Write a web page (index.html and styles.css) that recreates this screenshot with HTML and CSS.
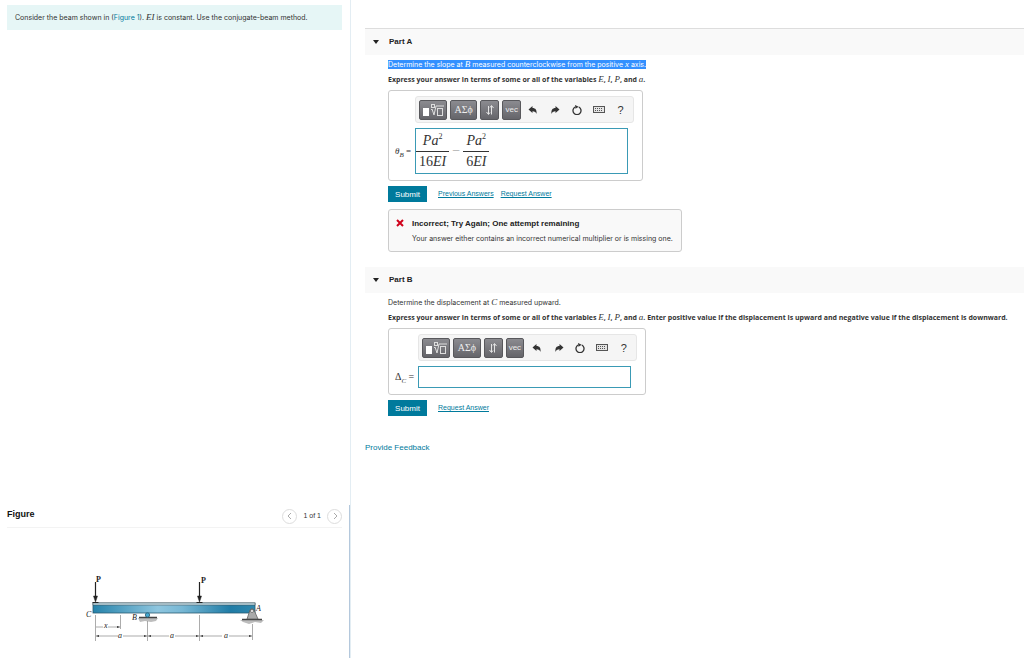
FILE: index.html
```html
<!DOCTYPE html>
<html lang="en">
<head>
    <meta charset="UTF-8">
    <meta name="viewport" content="width=device-width, initial-scale=1.0">
    <title>Conjugate-Beam Method</title>
    <link rel="stylesheet" href="styles.css">
</head>
<body>

    <!-- Shared icons -->
    <svg class="sprite" aria-hidden="true">
        <symbol id="icon-template" viewBox="0 0 22 14">
            <rect x="1" y="5" width="6" height="8" fill="#fff"/>
            <rect x="9.500" y="1.500" width="3" height="3" fill="none" stroke="#ddd"/>
            <path d="M9 7l1-1 2 6 2-9h8" fill="none" stroke="#ddd"/>
            <rect x="15.500" y="5.500" width="5" height="7" fill="none" stroke="#ddd"/>
        </symbol>
        <symbol id="icon-arrows" viewBox="0 0 10 12">
            <path d="M3.500 2v8M1.500 8l2 2.500L5 8.500M6.500 10.500V2M5 3.500l1.500-2 2 2.500" fill="none" stroke="#e4e4e4"/>
        </symbol>
        <symbol id="icon-undo" viewBox="0 0 10 10">
            <path d="M0.500 4.500L4.500 1v2c3 0 4.500 2 4 6-.6-1.800-1.800-2.800-4-2.800V8z" fill="#333"/>
        </symbol>
        <symbol id="icon-redo" viewBox="0 0 10 10">
            <path d="M9.500 4.500L5.500 1v2c-3 0-4.500 2-4 6 .6-1.800 1.800-2.800 4-2.800V8z" fill="#333"/>
        </symbol>
        <symbol id="icon-reset" viewBox="0 0 10 10">
            <path d="M3.200 2A4 4 0 1 0 6.800 2" fill="none" stroke="#333" stroke-width="1.300"/>
            <path d="M3 0l3.700 1.800-3.200 2z" fill="#333"/>
        </symbol>
        <symbol id="icon-keyboard" viewBox="0 0 12 8">
            <rect x="0.500" y="0.500" width="11" height="6" fill="#e4e4e4" stroke="#555"/>
            <path d="M2 2.500h8M2 4.500h8" fill="none" stroke="#555" stroke-dasharray="1 1"/>
        </symbol>
    </svg>

    <div class="page">

        <aside class="sidebar">
            <div class="prompt">
                Consider the beam shown in (<a href="#figure">Figure 1</a>). <i class="math">EI</i> is constant. Use the conjugate-beam method.
            </div>

            <section class="figure-pane" id="figure">
                <div class="figure-header">
                    <h2>Figure</h2>
                    <div class="pager">
                        <button type="button" class="page-button" aria-label="Previous figure">
                            <svg viewBox="0 0 8 8"><path d="M5 1L2 4l3 3"/></svg>
                        </button>
                        <span>1 of 1</span>
                        <button type="button" class="page-button" aria-label="Next figure">
                            <svg viewBox="0 0 8 8"><path d="M3 1l3 3-3 3"/></svg>
                        </button>
                    </div>
                </div>

                <svg class="beam" viewBox="0 0 200 80" role="img" aria-label="Beam with two loads P">
                    <defs>
                        <linearGradient id="steel">
                            <stop offset="0" stop-color="#2583ab"/>
                            <stop offset="0.400" stop-color="#8ec6df"/>
                            <stop offset="0.550" stop-color="#78b8d5"/>
                            <stop offset="0.850" stop-color="#1f7ca6"/>
                            <stop offset="1" stop-color="#2f87ad"/>
                        </linearGradient>
                    </defs>

                    <!-- beam -->
                    <rect x="18" y="33" width="162" height="10" fill="url(#steel)" stroke="#285a70" stroke-width="0.800"/>
                    <rect x="18" y="33" width="162" height="2" fill="#c5e4f0" stroke="#444" stroke-width="0.500"/>

                    <!-- loads -->
                    <g fill="#222" stroke="#222">
                        <path d="M20.500 12v16M124.500 12v16" fill="none" stroke-width="1.200"/>
                        <path d="M18.500 26h4l-2 6zM122.500 26h4l-2 6z" stroke-width="0.500"/>
                        <path d="M17.500 32.500h6M121.500 32.500h6" stroke-width="1"/>
                    </g>

                    <!-- roller B and pin A -->
                    <g fill="#bdbdbd">
                        <path d="M63 48h20l-2 3-5 1-6-1-5 1z"/>
                        <path d="M165 50h24l-3 3-6-1-6 2-6-2z"/>
                    </g>
                    <path d="M64 47.500h18M167 49.500h20" stroke="#444" stroke-width="1.500"/>
                    <circle cx="72.500" cy="45" r="2.200" fill="#45a8cf" stroke="#235a73" stroke-width="0.800"/>
                    <path d="M172 49l3-9q2-3 4 0l4 9z" fill="#aaa" stroke="#555" stroke-width="0.700"/>
                    <circle cx="177" cy="41" r="1.500" fill="#fff" stroke="#555" stroke-width="0.700"/>

                    <!-- dimensions -->
                    <g fill="none" stroke="#888" stroke-width="0.700">
                        <path d="M20.500 45v26M45.500 45v14M72.500 51v20M124.500 45v26M177.500 54v16"/>
                        <path d="M21 57h7M33 57h12M21 66h22M48 66h46M100 66h47M154 66h23"/>
                    </g>
                    <path d="M45 57l-3-1v2zM21 66l3-1v2zM72 66l-3-1v2zM73 66l3-1v2zM124 66l-3-1v2zM125 66l3-1v2zM177 66l-3-1v2z" fill="#333"/>

                    <g class="beam-label">
                        <text x="21" y="12" class="load">P</text>
                        <text x="126" y="13" class="load">P</text>
                        <text x="11" y="47">C</text>
                        <text x="57" y="50">B</text>
                        <text x="181" y="41">A</text>
                        <text x="29" y="58">x</text>
                        <text x="43" y="68">a</text>
                        <text x="95" y="68">a</text>
                        <text x="149" y="68">a</text>
                    </g>
                </svg>
            </section>
        </aside>

        <main class="content">

            <section class="part">
                <h2 class="part-header first"><span class="caret"></span>Part A</h2>
                <div class="part-body">
                    <p><span class="selected">Determine the slope at <i class="math">B</i> measured counterclockwise from the positive <i class="math">x</i> axis.</span></p>
                    <p class="instructions">Express your answer in terms of some or all of the variables <i class="math">E</i>, <i class="math">I</i>, <i class="math">P</i>, and <i class="math">a</i>.</p>

                    <div class="answer-box">
                        <div class="toolbar">
                            <button type="button" class="tool wide" aria-label="Templates"><svg width="22" height="14"><use href="#icon-template"/></svg></button>
                            <button type="button" class="tool wide greek">ΑΣϕ</button>
                            <button type="button" class="tool" aria-label="Subscripts"><svg width="10" height="12"><use href="#icon-arrows"/></svg></button>
                            <button type="button" class="tool">vec</button>
                            <button type="button" class="icon-button" aria-label="Undo"><svg width="10" height="10"><use href="#icon-undo"/></svg></button>
                            <button type="button" class="icon-button" aria-label="Redo"><svg width="10" height="10"><use href="#icon-redo"/></svg></button>
                            <button type="button" class="icon-button" aria-label="Reset"><svg width="10" height="10"><use href="#icon-reset"/></svg></button>
                            <button type="button" class="icon-button" aria-label="Keyboard"><svg width="12" height="8"><use href="#icon-keyboard"/></svg></button>
                            <button type="button" class="icon-button help">?</button>
                        </div>
                        <span class="answer-label" id="label-a"><i>θ<sub>B</sub></i> =</span>
                        <div class="answer-field formula" role="textbox" contenteditable="true" aria-labelledby="label-a">
                            <span class="fraction"><span class="top"><i>Pa</i><sup>2</sup></span><span>16<i>EI</i></span></span>
                            <span class="minus">−</span>
                            <span class="fraction"><span class="top"><i>Pa</i><sup>2</sup></span><span>6<i>EI</i></span></span>
                        </div>
                    </div>

                    <div class="actions">
                        <button type="submit" class="submit">Submit</button>
                        <a href="#">Previous Answers</a>
                        <a href="#">Request Answer</a>
                    </div>

                    <div class="feedback">
                        <svg class="cross" viewBox="0 0 8 8"><path d="M1 1l6 6M7 1L1 7"/></svg>
                        <div>
                            <h3>Incorrect; Try Again; One attempt remaining</h3>
                            <p>Your answer either contains an incorrect numerical multiplier or is missing one.</p>
                        </div>
                    </div>
                </div>
            </section>

            <section class="part">
                <h2 class="part-header"><span class="caret"></span>Part B</h2>
                <div class="part-body">
                    <p>Determine the displacement at <i class="math">C</i> measured upward.</p>
                    <p class="instructions">Express your answer in terms of some or all of the variables <i class="math">E</i>, <i class="math">I</i>, <i class="math">P</i>, and <i class="math">a</i>. Enter positive value if the displacement is upward and negative value if the displacement is downward.</p>

                    <div class="answer-box">
                        <div class="toolbar">
                            <button type="button" class="tool wide" aria-label="Templates"><svg width="22" height="14"><use href="#icon-template"/></svg></button>
                            <button type="button" class="tool wide greek">ΑΣϕ</button>
                            <button type="button" class="tool" aria-label="Subscripts"><svg width="10" height="12"><use href="#icon-arrows"/></svg></button>
                            <button type="button" class="tool">vec</button>
                            <button type="button" class="icon-button" aria-label="Undo"><svg width="10" height="10"><use href="#icon-undo"/></svg></button>
                            <button type="button" class="icon-button" aria-label="Redo"><svg width="10" height="10"><use href="#icon-redo"/></svg></button>
                            <button type="button" class="icon-button" aria-label="Reset"><svg width="10" height="10"><use href="#icon-reset"/></svg></button>
                            <button type="button" class="icon-button" aria-label="Keyboard"><svg width="12" height="8"><use href="#icon-keyboard"/></svg></button>
                            <button type="button" class="icon-button help">?</button>
                        </div>
                        <label class="answer-label large" for="answer-b">Δ<sub><i>C</i></sub> =</label>
                        <input type="text" class="answer-field" id="answer-b">
                    </div>

                    <div class="actions">
                        <button type="submit" class="submit">Submit</button>
                        <a href="#">Request Answer</a>
                    </div>
                </div>
            </section>

            <a href="#" class="provide-feedback">Provide Feedback</a>
        </main>
    </div>

</body>
</html>
```
FILE: styles.css
```css
* {
    box-sizing: border-box;
}

body {
    margin: 0;
    font-family: "Liberation Sans", Arial, sans-serif;
    font-size: 7px;
    line-height: 10px;
    color: #333;
    background-color: white;
}

h2, h3, p {
    margin: 0;
}

p, .prompt {
    font-family: Inter, Arial, sans-serif;
}

a {
    color: #007a9c;
}

button {
    padding: 0;
    border: none;
    font-family: inherit;
    cursor: pointer;
}

.sprite {
    display: none;
}

.page {
    display: flex;
    min-height: 100vh;
}

/* Left column */

.sidebar {
    display: flex;
    flex-direction: column;
    flex: 0 0 351px;
    padding-left: 7px;
    border-right: 1px solid #e3edf3;
}

.prompt {
    margin: 5px 8px 0 0;
    padding: 8px 8px 7px;
    background-color: #e6f6f6;
}

.prompt a {
    text-decoration: none;
}

.math {
    font-family: "Liberation Serif", "Times New Roman", serif;
    font-size: 9px;
    font-weight: normal;
    line-height: 8px;
}

.figure-pane {
    margin-top: auto;
    padding-right: 7px;
    border-right: 1px solid #b4c8dc;
}

.figure-header {
    display: flex;
    align-items: center;
    justify-content: space-between;
    height: 23px;
    border-bottom: 1px solid #f3f3f3;
}

.figure-header h2 {
    padding-bottom: 4px;
    font-size: 9px;
    color: #111;
}

.pager {
    display: flex;
    align-items: center;
    gap: 6px;
}

.page-button {
    display: flex;
    align-items: center;
    justify-content: center;
    width: 15px;
    height: 15px;
    border: 1px solid #ddd;
    border-radius: 50%;
    background-color: white;
}

.page-button svg {
    width: 8px;
    height: 8px;
    fill: none;
    stroke: #aaa;
}

.beam {
    display: block;
    width: 200px;
    height: 80px;
    margin: 42px 0 8px 68px;
}

.beam-label {
    font-family: "Liberation Serif", "Times New Roman", serif;
    font-size: 8px;
    font-style: italic;
    fill: #222;
}

.load {
    font-style: normal;
    font-weight: bold;
}

/* Right column */

.content {
    flex: 1;
    padding: 28px 0 20px 14px;
}

.part {
    margin-bottom: 15px;
}

.part-header {
    display: flex;
    align-items: center;
    gap: 10px;
    height: 26px;
    padding-left: 8px;
    font-size: 8px;
    color: #222;
    background-color: #f9f9f9;
}

.part-header.first {
    height: 27px;
    border-top: 1px solid #ddd;
}

.caret {
    border: 3px solid transparent;
    border-top: 4px solid #222;
    border-bottom: none;
}

.part-body {
    padding: 5px 0 0 23px;
}

.instructions {
    margin-top: 5px;
    font-family: "Open Sans", Arial, sans-serif;
    font-weight: bold;
}

.selected {
    color: white;
    background-color: #3390ff;
}

.answer-box {
    display: grid;
    grid-template-columns: auto 219px;
    column-gap: 4px;
    row-gap: 5px;
    align-items: center;
    width: fit-content;
    margin-top: 5px;
    padding: 5px 8px 6px 6px;
    border: 1px solid #ccc;
    border-radius: 3px;
}

.toolbar {
    grid-column: 2;
    display: flex;
    align-items: center;
    gap: 3px;
    height: 27px;
    padding: 3px;
    border: 1px solid #e6e6e6;
    border-radius: 3px;
    background-color: #f5f5f5;
}

.tool {
    display: flex;
    align-items: center;
    justify-content: center;
    width: 19px;
    height: 20px;
    border: 1px solid #58585c;
    border-radius: 2px;
    font-size: 8px;
    color: #eee;
    background-image: linear-gradient(#8b8b90, #65656a);
}

.wide {
    width: 28px;
}

.greek {
    font-family: "Liberation Serif", "Times New Roman", serif;
    font-size: 10px;
}

.icon-button {
    display: flex;
    align-items: center;
    justify-content: center;
    width: 19px;
    height: 20px;
    color: #333;
    background: none;
}

.help {
    font-size: 11px;
}

.answer-label {
    font-family: "Liberation Serif", "Times New Roman", serif;
    font-size: 9px;
}

.answer-label.large {
    font-size: 10px;
}

.answer-label sub {
    font-size: 7px;
    line-height: 0;
}

.answer-field {
    width: 213px;
    height: 22px;
    border: 1px solid #3a9ab5;
    background-color: white;
}

.formula {
    display: flex;
    align-items: center;
    gap: 3px;
    height: 46px;
    font-family: "Liberation Serif", "Times New Roman", serif;
    font-size: 14px;
    line-height: 20px;
}

.fraction {
    display: flex;
    flex-direction: column;
    align-items: center;
}

.top {
    align-self: stretch;
    border-bottom: 1px solid #333;
    text-align: center;
}

.fraction span {
    padding: 0 3px;
}

.fraction sup {
    font-size: 8px;
    line-height: 0;
}

.minus {
    color: #aaa;
}

.actions {
    display: flex;
    align-items: center;
    gap: 7px;
    margin-top: 5px;
}

.submit {
    width: 39px;
    height: 16px;
    margin-right: 4px;
    font-size: 8px;
    color: white;
    background-color: #007a9c;
}

.feedback {
    display: flex;
    gap: 8px;
    width: fit-content;
    margin-top: 7px;
    padding: 8px 8px 7px 7px;
    border: 1px solid #ccc;
    border-radius: 3px;
    background-color: #f9f9f9;
}

.feedback h3 {
    font-size: 8px;
    line-height: 11px;
    color: #222;
}

.feedback p {
    margin-top: 5px;
}

.cross {
    flex: none;
    width: 8px;
    height: 8px;
    margin-top: 1px;
    stroke: #d0021b;
    stroke-width: 2;
}

.provide-feedback {
    display: block;
    width: fit-content;
    margin-top: 27px;
    font-size: 8px;
    text-decoration: none;
}
```
